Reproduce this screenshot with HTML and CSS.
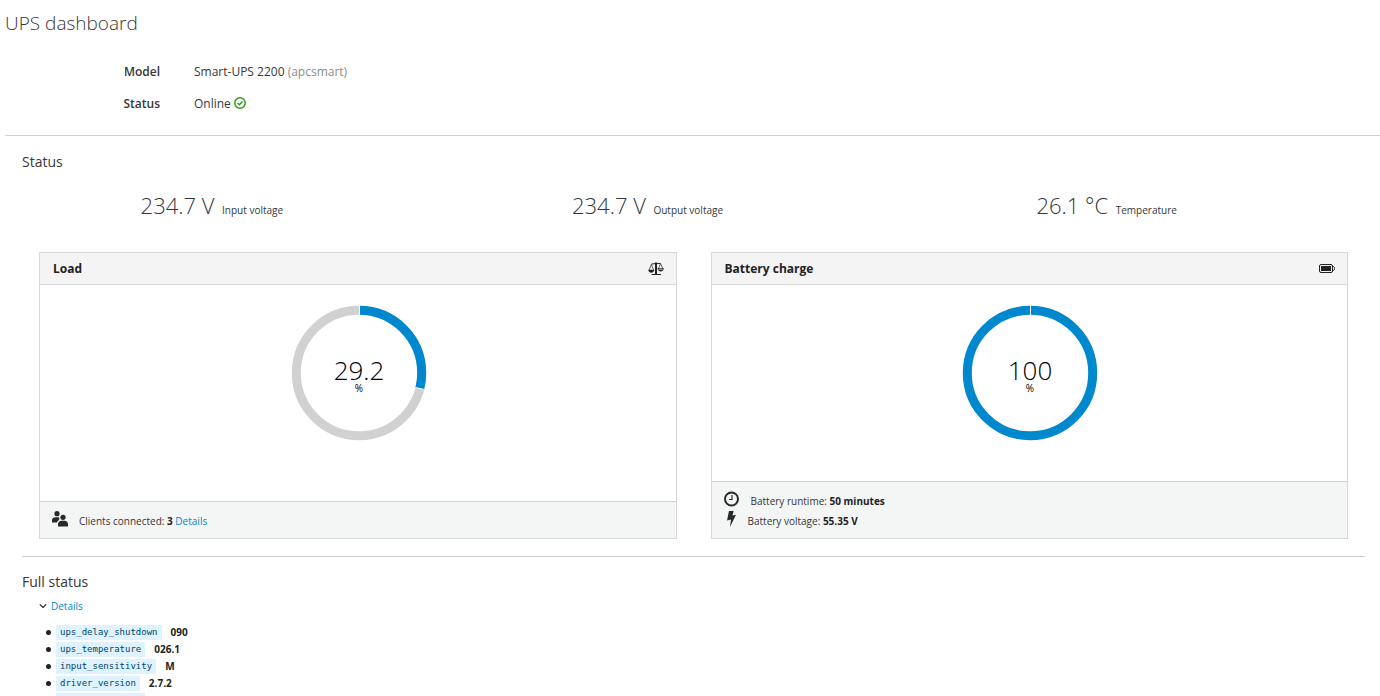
FILE: index.html
```html
<!DOCTYPE html>
<html lang="en">
<head>
    <meta charset="UTF-8">
    <meta name="viewport" content="width=device-width, initial-scale=1.0">
    <title>UPS dashboard</title>
    <link rel="stylesheet" href="styles.css">
</head>
<body>

<h1>UPS dashboard</h1>

<dl class="info">
    <dt>Model</dt>
    <dd>Smart-UPS 2200 <span class="muted">(apcsmart)</span></dd>
    <dt>Status</dt>
    <dd>Online
        <svg class="icon-ok" viewBox="0 0 12 12" aria-hidden="true">
            <circle cx="6" cy="6" r="5.2"/>
            <path d="M3.5 6l1.8 1.8 3.2-3.3"/>
        </svg>
    </dd>
</dl>

<main>
    <section class="status">
        <h2>Status</h2>

        <div class="stats">
            <p><span class="value">234.7 V</span> Input voltage</p>
            <p><span class="value">234.7 V</span> Output voltage</p>
            <p><span class="value">26.1 °C</span> Temperature</p>
        </div>

        <div class="cards">
            <article class="card">
                <header>
                    <h3>Load</h3>
                    <svg class="icon-head" viewBox="0 0 16 16" aria-hidden="true">
                        <path class="line" d="M3.2 3.2L7 2.6h2l3.6-.3M7.500 1.500v12M8.500 1.500v12M3.500 13.500h9.500"/>
                        <path class="line thin" d="M3.3 3.5L1.2 9M3.3 3.5L5.7 9M12.6 2.7L10.2 8M12.6 2.7L15 8"/>
                        <path d="M.3 8.800h5.900c0 4-5.900 4-5.900 0z"/>
                        <path class="line thin" d="M9.9 7.500h5.600c0 3.500-5.600 3.500-5.600 0z"/>
                        <path d="M10.300 8.500h4.800c-.8 2-4 2-4.800 0z"/>
                    </svg>
                </header>
                <div class="card-body">
                    <svg class="donut" viewBox="0 0 136 136">
                        <circle class="track" cx="68" cy="68" r="62.7" pathLength="1000"/>
                        <circle class="used" cx="68" cy="68" r="62.7" pathLength="1000" stroke-dasharray="290 710"/>
                        <path class="gap" d="M68.500 0v11M124.3 82.500l10.5 2.300"/>
                        <text class="number" x="68" y="75">29.2</text>
                        <text class="unit" x="68" y="87">%</text>
                    </svg>
                </div>
                <footer>
                    <p>
                        <svg class="icon-foot wide" viewBox="0 0 16 16" aria-hidden="true">
                            <circle cx="5" cy="2.700" r="2.600"/>
                            <path d="M0 11.500V9.500C0 7.200 1.500 6.200 3.500 6.200h3.300l.7 1.800-2.700 3.500z"/>
                            <circle cx="11" cy="6.300" r="2.600"/>
                            <path d="M6 15.500V13.500c0-2.500 1.500-3.700 3.500-3.700h3c2 0 3.500 1.200 3.500 3.700v2z"/>
                        </svg>
                        <span>Clients connected: <b>3</b> <a href="#clients">Details</a></span>
                    </p>
                </footer>
            </article>

            <article class="card">
                <header>
                    <h3>Battery charge</h3>
                    <svg class="icon-head" viewBox="0 0 16 16" aria-hidden="true">
                        <rect class="line" x=".5" y="3.500" width="13" height="8" rx="1.500"/>
                        <rect x="2" y="5" width="10" height="5"/>
                        <path class="line" d="M13.500 5.500h1c1.300 0 1.300 4 0 4h-1"/>
                    </svg>
                </header>
                <div class="card-body">
                    <svg class="donut" viewBox="0 0 136 136">
                        <circle class="used" cx="68" cy="68" r="62.7"/>
                        <path class="gap" d="M68.500 0v11"/>
                        <text class="number" x="68" y="75">100</text>
                        <text class="unit" x="68" y="87">%</text>
                    </svg>
                </div>
                <footer>
                    <p>
                        <svg class="icon-foot wide" viewBox="0 0 16 16" aria-hidden="true">
                            <circle class="ring" cx="7.500" cy="8" r="6.500"/>
                            <path class="hands" d="M8 4v4.500H5"/>
                        </svg>
                        <span>Battery runtime: <b>50 minutes</b></span>
                    </p>
                    <p>
                        <svg class="icon-foot" viewBox="0 0 16 16" aria-hidden="true">
                            <path d="M5 0h4.700L8.400 4.500l3.600-.7L6 16l1-7.500-4 1z"/>
                        </svg>
                        <span>Battery voltage: <b>55.35 V</b></span>
                    </p>
                </footer>
            </article>
        </div>
    </section>

    <section class="full-status">
        <h2>Full status</h2>
        <details open>
            <summary>
                <svg viewBox="0 0 8 8" aria-hidden="true"><path d="M.8 2.300L4 5.500l3.200-3.200"/></svg>
                <span>Details</span>
            </summary>
            <ul>
                <li><code>ups_delay_shutdown</code> <b>090</b></li>
                <li><code>ups_temperature</code> <b>026.1</b></li>
                <li><code>input_sensitivity</code> <b>M</b></li>
                <li><code>driver_version</code> <b>2.7.2</b></li>
                <li><code>ups_temperature</code></li>
            </ul>
        </details>
    </section>
</main>

</body>
</html>
```

FILE: styles.css
```css
* {
    box-sizing: border-box;
}

html {
    height: 100%;
    overflow: hidden;
}

body {
    height: 100%;
    margin: 0;
    padding: 8px 0 0 5px;
    overflow: hidden;
    background-color: #fff;
    color: #363636;
    font-family: 'Open Sans', sans-serif;
    font-size: 10px;
    line-height: 20px;
}

h1, h2, h3, p, dl, dd, ul {
    margin: 0;
    padding: 0;
}

h1 {
    font-size: 19px;
    font-weight: 300;
    line-height: 30px;
}

h2 {
    font-size: 14px;
    font-weight: 400;
    line-height: 20px;
}

a, summary span {
    color: #0088ce;
    text-decoration: none;
}

b {
    color: #222;
    font-weight: 700;
}

/* Model and status */
.info {
    display: grid;
    grid-template-columns: 155px 1fr;
    column-gap: 34px;
    row-gap: 12px;
    padding: 24px 0 21px;
    border-bottom: 1px solid #d1d1d1;
    font-size: 12px;
}

.info dt {
    text-align: right;
    font-weight: 600;
}

.muted {
    color: #8b8d8f;
}

.icon-ok {
    width: 12px;
    height: 12px;
    vertical-align: -1px;
    fill: none;
    stroke: #2f9a18;
    stroke-width: 1.5;
}

main {
    padding: 16px 15px 0 17px;
}

/* Voltages and temperature */
.stats {
    display: grid;
    grid-template-columns: 380fr 492fr 427fr;
    padding: 17px 45px 31px 0;
    text-align: center;
}

.stats .value {
    margin-right: 5px;
    font-size: 22px;
    font-weight: 300;
    line-height: 32px;
}

/* Cards */
.cards {
    display: grid;
    grid-template-columns: 1fr 1fr;
    gap: 34px;
    padding: 0 17px;
}

.card {
    display: flex;
    flex-direction: column;
    border: 1px solid #d8d8d8;
}

.card header {
    display: flex;
    justify-content: space-between;
    align-items: center;
    padding: 6px 12px 5px 13px;
    background-color: #f4f4f4;
    border-bottom: 1px solid #d8d8d8;
}

.card h3 {
    color: #222;
    font-size: 12px;
    font-weight: 700;
}

.card-body {
    flex: 1;
    padding: 20px 0 40px 2px;
    text-align: center;
}

.card footer {
    padding: 9px 12px 7px;
    background-color: #f4f5f5;
    border-top: 1px solid #d1d1d1;
}

.card footer p {
    display: flex;
    align-items: flex-start;
}

.icon-head {
    width: 16px;
    height: 16px;
    fill: #222;
}

.icon-head .line {
    fill: none;
    stroke: #222;
    stroke-width: 1;
}

.icon-head .thin {
    stroke-width: 0.7;
}

.icon-foot {
    width: 16px;
    height: 16px;
    margin-right: 8px;
    fill: #292929;
}

.icon-foot.wide {
    margin-right: 11px;
}

.icon-foot .ring {
    fill: none;
    stroke: #292929;
    stroke-width: 2;
}

.icon-foot .hands {
    fill: none;
    stroke: #292929;
    stroke-width: 1.2;
}

/* Donut charts */
.donut {
    display: block;
    width: 136px;
    height: 136px;
    margin: 0 auto;
}

.donut circle {
    fill: none;
    stroke-width: 9;
    transform: rotate(-90deg);
    transform-origin: center;
}

.donut .track {
    stroke: #d1d1d1;
}

.donut .used {
    stroke: #0088ce;
}

.donut .gap {
    fill: none;
    stroke: #fff;
    stroke-width: 1;
}

.donut text {
    fill: #000;
    text-anchor: middle;
}

.donut .number {
    font-size: 26px;
    font-weight: 300;
}

.donut .unit {
    font-size: 10px;
}

/* Full status list */
.full-status {
    margin-top: 17px;
    padding-top: 15px;
    border-top: 1px solid #d1d1d1;
}

details {
    padding: 4px 17px;
}

summary {
    display: flex;
    align-items: center;
    gap: 4px;
    list-style: none;
    cursor: pointer;
}

summary svg {
    width: 8px;
    height: 8px;
    fill: none;
    stroke: #222;
    stroke-width: 1.2;
}

details ul {
    padding: 8px 0 0 7px;
    line-height: 17px;
    list-style: none;
}

details li {
    display: flex;
    align-items: center;
    height: 17px;
}

details li::before {
    content: "";
    width: 5px;
    height: 5px;
    margin-right: 5px;
    border-radius: 50%;
    background-color: #222;
}

code {
    margin-right: 9px;
    padding: 0 4px;
    background-color: #def3ff;
    color: #004368;
    font-family: 'DejaVu Sans Mono', monospace;
    font-size: 9px;
    line-height: 15px;
}
```
